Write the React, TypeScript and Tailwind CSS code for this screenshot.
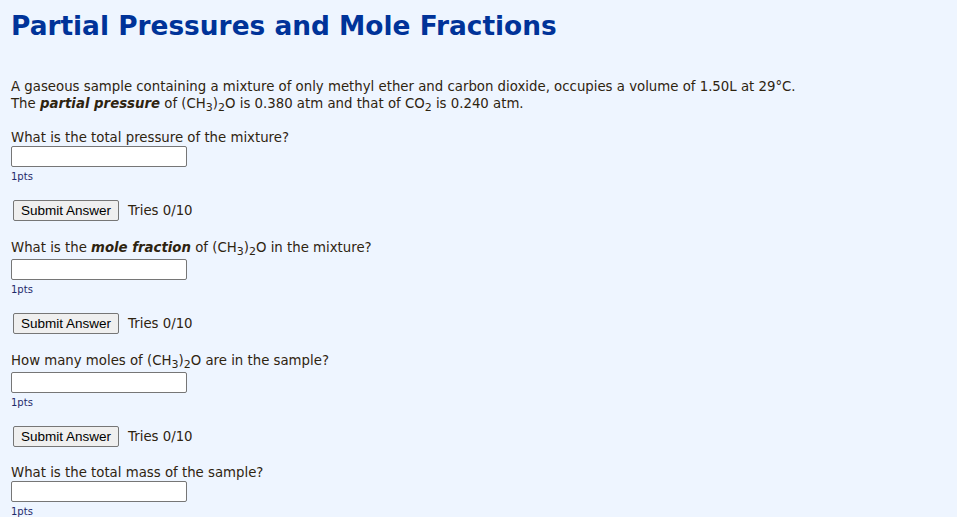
const font = "font-['DejaVu_Sans',Verdana,sans-serif]";

function Sub({ children }: { children: React.ReactNode }) {
  return <sub className="text-[11px]">{children}</sub>;
}

function CH3() {
  return (
    <>
      (CH<Sub>3</Sub>)<Sub>2</Sub>O
    </>
  );
}

function Question({
  children,
  submit = true,
  hasSub = false,
}: {
  children: React.ReactNode;
  submit?: boolean;
  hasSub?: boolean;
}) {
  return (
    <div className="mb-[17px]">
      <p className={hasSub ? "leading-[17px] pb-[3px] pt-[1px]" : "leading-[17px]"}>{children}</p>
      <input
        type="text"
        className="block h-[21px] w-[176px] rounded-[2px] border border-[#767676] bg-white"
      />
      <div className="mt-[3px] text-[10px] leading-[14px] text-[#1f2a6b]">1pts</div>
      {submit && (
        <div className="mt-[16px] flex items-center gap-[9px] pl-[2px]">
          <button className="h-[21px] rounded-[2px] border border-[#767676] bg-[#efefef] px-[7px] font-['Liberation_Sans',Arial,sans-serif] text-[13.5px] text-black">
            Submit Answer
          </button>
          <span>Tries 0/10</span>
        </div>
      )}
    </div>
  );
}

export default function App() {
  return (
    <div className={`min-h-screen bg-[#eef5ff] px-[11px] pt-[8px] text-[13.3px] text-[#2e2410] ${font}`}>
      <h1 className="text-[26.4px] font-bold leading-[36px] text-[#003399]">
        Partial Pressures and Mole Fractions
      </h1>

      <p className="mt-[34px] leading-[17px]">
        A gaseous sample containing a mixture of only methyl ether and carbon dioxide, occupies a volume of 1.50L at 29°C.
        <br />
        The <b><i>partial pressure</i></b> of <CH3 /> is 0.380 atm and that of CO<Sub>2</Sub> is 0.240 atm.
      </p>

      <div className="mt-[17px]">
        <Question>What is the total pressure of the mixture?</Question>
        <Question hasSub>
          What is the <b><i>mole fraction</i></b> of <CH3 /> in the mixture?
        </Question>
        <Question hasSub>
          How many moles of <CH3 /> are in the sample?
        </Question>
        <Question submit={false}>What is the total mass of the sample?</Question>
      </div>
    </div>
  );
}
